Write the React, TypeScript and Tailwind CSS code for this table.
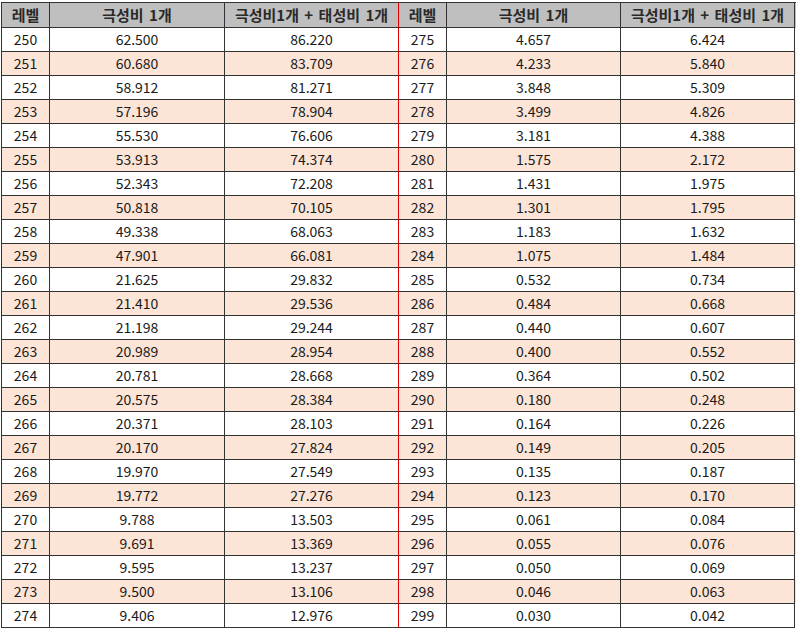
const left = {
  a: ["62.500", "60.680", "58.912", "57.196", "55.530", "53.913", "52.343", "50.818", "49.338", "47.901", "21.625", "21.410", "21.198", "20.989", "20.781", "20.575", "20.371", "20.170", "19.970", "19.772", "9.788", "9.691", "9.595", "9.500", "9.406"],
  b: ["86.220", "83.709", "81.271", "78.904", "76.606", "74.374", "72.208", "70.105", "68.063", "66.081", "29.832", "29.536", "29.244", "28.954", "28.668", "28.384", "28.103", "27.824", "27.549", "27.276", "13.503", "13.369", "13.237", "13.106", "12.976"],
};

const right = {
  a: ["4.657", "4.233", "3.848", "3.499", "3.181", "1.575", "1.431", "1.301", "1.183", "1.075", "0.532", "0.484", "0.440", "0.400", "0.364", "0.180", "0.164", "0.149", "0.135", "0.123", "0.061", "0.055", "0.050", "0.046", "0.030"],
  b: ["6.424", "5.840", "5.309", "4.826", "4.388", "2.172", "1.975", "1.795", "1.632", "1.484", "0.734", "0.668", "0.607", "0.552", "0.502", "0.248", "0.226", "0.205", "0.187", "0.170", "0.084", "0.076", "0.069", "0.063", "0.042"],
};

const cols = "grid grid-cols-[48px_175px_173px_49px_174px_174px]";
const cell = "flex items-center justify-center border-r border-b border-[#333]";
const redCell = "flex items-center justify-center border-b border-[#333]";
const redLine = "border-l border-l-[#e00000]";

export default function App() {
  const rows = Array.from({ length: 25 }, (_, i) => i);

  return (
    <div className="bg-white w-[800px] h-[634px] pl-[1px] pt-[2px] font-['Noto_Sans_CJK_KR','Noto_Sans',sans-serif] text-[14px] text-[#1a1a1a]">
      <div className="w-[795px] border-l border-t border-[#333]">
        <div className={`${cols} h-[25px] bg-[#bfbfbf] font-bold text-[15px] text-[#2a2a2a] [word-spacing:2px]`}>
          <div className={cell}>레벨</div>
          <div className={cell}>극성비 1개</div>
          <div className={redCell}>극성비1개 + 태성비 1개</div>
          <div className={`${cell} ${redLine}`}>레벨</div>
          <div className={cell}>극성비 1개</div>
          <div className={cell}>극성비1개 + 태성비 1개</div>
        </div>
        {rows.map((i) => (
          <div
            key={i}
            className={`${cols} h-[24px] ${i % 2 === 1 ? "bg-[#fce4d6]" : "bg-white"}`}
          >
            <div className={cell}>{250 + i}</div>
            <div className={cell}>{left.a[i]}</div>
            <div className={redCell}>{left.b[i]}</div>
            <div className={`${cell} ${redLine}`}>{275 + i}</div>
            <div className={cell}>{right.a[i]}</div>
            <div className={cell}>{right.b[i]}</div>
          </div>
        ))}
      </div>
    </div>
  );
}
